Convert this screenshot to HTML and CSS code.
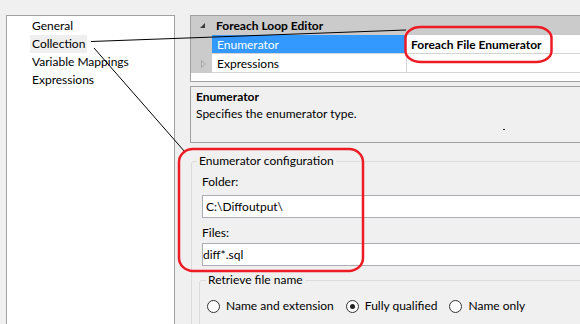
FILE: index.html
```html
<!DOCTYPE html>
<html>
<head>
<meta charset="utf-8">
<link rel="stylesheet" href="styles.css">
</head>
<body>
<div class="screen">
  <div class="nav">
    <ul class="nav-list">
      <li class="nav-item">General</li>
      <li class="nav-item is-selected">Collection</li>
      <li class="nav-item">Variable Mappings</li>
      <li class="nav-item">Expressions</li>
    </ul>
  </div>
  <div class="main">
    <div class="grid">
      <div class="grid-cat">
        <span class="grid-margin"><svg class="glyph" width="6" height="6" viewBox="0 0 6 6"><polygon points="5,0 5,5 0,5" fill="#3c3c3c"/></svg></span>
        <span class="grid-cat-label">Foreach Loop Editor</span>
      </div>
      <div class="grid-row is-selected">
        <span class="grid-margin"></span>
        <span class="grid-name">Enumerator</span>
        <span class="grid-value">Foreach File Enumerator</span>
      </div>
      <div class="grid-row">
        <span class="grid-margin"><svg class="glyph glyph-expand" width="5" height="8" viewBox="0 0 5 8"><polygon points="0.5,0.5 4.5,4 0.5,7.5" fill="none" stroke="#a6a6a6"/></svg></span>
        <span class="grid-name">Expressions</span>
        <span class="grid-value grid-value-empty"></span>
      </div>
      <div class="grid-fill"></div>
    </div>
    <div class="desc">
      <div class="desc-title">Enumerator</div>
      <div class="desc-text">Specifies the enumerator type.</div>
    </div>
    <fieldset class="group">
      <legend class="group-legend">Enumerator configuration</legend>
      <div class="field-label">Folder:</div>
      <div class="textbox textbox-first">C:\Diffoutput\</div>
      <div class="field-label field-label-second">Files:</div>
      <div class="textbox textbox-second">diff*.sql</div>
      <fieldset class="group group-inner">
        <legend class="group-legend group-legend-inner">Retrieve file name</legend>
        <div class="radios">
          <span class="radio"><span class="radio-dot"></span>Name and extension</span>
          <span class="radio"><span class="radio-dot is-checked"></span>Fully qualified</span>
          <span class="radio"><span class="radio-dot"></span>Name only</span>
        </div>
      </fieldset>
    </fieldset>
  </div>
  <svg class="annot" width="580" height="324" viewBox="0 0 580 324">
    <line x1="91" y1="41.5" x2="406" y2="30" stroke="#000" stroke-width="1"/>
    <line x1="94" y1="48" x2="185" y2="152" stroke="#000" stroke-width="1"/>
    <rect x="405.5" y="27" width="146" height="35" rx="15" ry="11" fill="none" stroke="#ed1c24" stroke-width="2.5"/>
    <rect x="179" y="149" width="184" height="122" rx="14" ry="13" fill="none" stroke="#ed1c24" stroke-width="2.5"/>
    <rect x="503" y="129" width="2" height="1" fill="#222"/>
  </svg>
</div>
</body>
</html>
```
FILE: styles.css
```css
html, body {
  margin: 0;
  padding: 0;
}
body {
  background: #f0f0f0;
  font-family: "Lato", "Noto Sans", sans-serif;
  font-size: 12px;
  color: #000;
  width: 580px;
  height: 324px;
  overflow: hidden;
}
.screen {
  position: relative;
  width: 580px;
  height: 324px;
  overflow: hidden;
  display: flex;
  align-items: flex-start;
  padding: 15px 0 0 6px;
  box-sizing: border-box;
}
.nav {
  flex: 0 0 auto;
  width: 167px;
  height: 330px;
  background: #fff;
  border: 1px solid #a0a0a0;
}
.nav-list {
  list-style: none;
  margin: 0;
  padding: 1px 0 0 0;
}
.nav-item {
  height: 18px;
  line-height: 18px;
  padding: 0 2px;
  margin-left: 23px;
  width: max-content;
}
.nav-item.is-selected {
  background: #efefef;
}
.main {
  flex: 0 0 auto;
  width: 420px;
  margin-left: 15px;
  display: flex;
  flex-direction: column;
}
.grid {
  border: 1px solid #a0a0a0;
  background: #fff;
  display: flex;
  flex-direction: column;
}
.grid-cat {
  height: 19px;
  background: #cbcbcb;
  display: flex;
  align-items: center;
}
.grid-margin {
  flex: 0 0 21px;
  align-self: stretch;
  background: #cbcbcb;
  display: flex;
  align-items: center;
}
.glyph {
  display: block;
  margin-left: 9px;
}
.glyph-expand {
  margin-left: 10px;
}
.grid-cat-label {
  font-weight: bold;
  padding-left: 4px;
}
.grid-row {
  display: flex;
  height: 19px;
}
.grid-name {
  flex: 0 0 189px;
  padding: 1px 0 0 5px;
  line-height: 17px;
  border-bottom: 1px solid #d4d4d4;
  border-right: 1px solid #d4d4d4;
}
.grid-value {
  flex: 1 1 auto;
  padding: 1px 0 0 4px;
  line-height: 17px;
  font-weight: bold;
  border-bottom: 1px solid #d4d4d4;
}
.grid-row.is-selected .grid-name {
  background: #3399ff;
  color: #fff;
  border-right-color: #fff;
}
.grid-fill {
  height: 8px;
}
.desc {
  margin-top: 4px;
  border: 1px solid #a0a0a0;
  padding: 1px 0 0 5px;
  box-sizing: border-box;
  height: 57px;
}
.desc-title {
  font-weight: bold;
  line-height: 17px;
}
.desc-text {
  line-height: 18px;
}
.group {
  margin: 10px 0 0 1px;
  padding: 5px 0 0 10px;
  border: 1px solid #dcdcdc;
  border-radius: 3px;
  min-width: 0;
}
.group-legend {
  padding: 0 2px;
  margin-left: -5px;
  line-height: 16px;
}
.field-label {
  line-height: 16px;
}
.field-label-second {
  margin-top: 7px;
}
.textbox {
  margin-top: 5px;
  height: 21px;
  line-height: 21px;
  background: #fff;
  border: 1px solid #abadb3;
  border-right: none;
  padding-left: 3px;
}
.textbox-second {
  margin-top: 2px;
  padding-left: 0;
}
.group-inner {
  margin: 6px 0 0 -3px;
  padding: 10px 0 20px 7px;
}
.group-legend-inner {
  margin-left: -1px;
}
.radios {
  display: flex;
  align-items: center;
  height: 16px;
}
.radio {
  display: flex;
  align-items: center;
  margin-right: 12px;
  line-height: 16px;
}
.radio-dot {
  width: 11px;
  height: 11px;
  border: 1px solid #333;
  border-radius: 50%;
  background: #fff;
  margin-right: 6px;
  display: flex;
  align-items: center;
  justify-content: center;
}
.radio-dot.is-checked::after {
  content: "";
  width: 5px;
  height: 5px;
  border-radius: 50%;
  background: #222;
}
.annot {
  position: absolute;
  left: 0;
  top: 0;
  pointer-events: none;
}
```
